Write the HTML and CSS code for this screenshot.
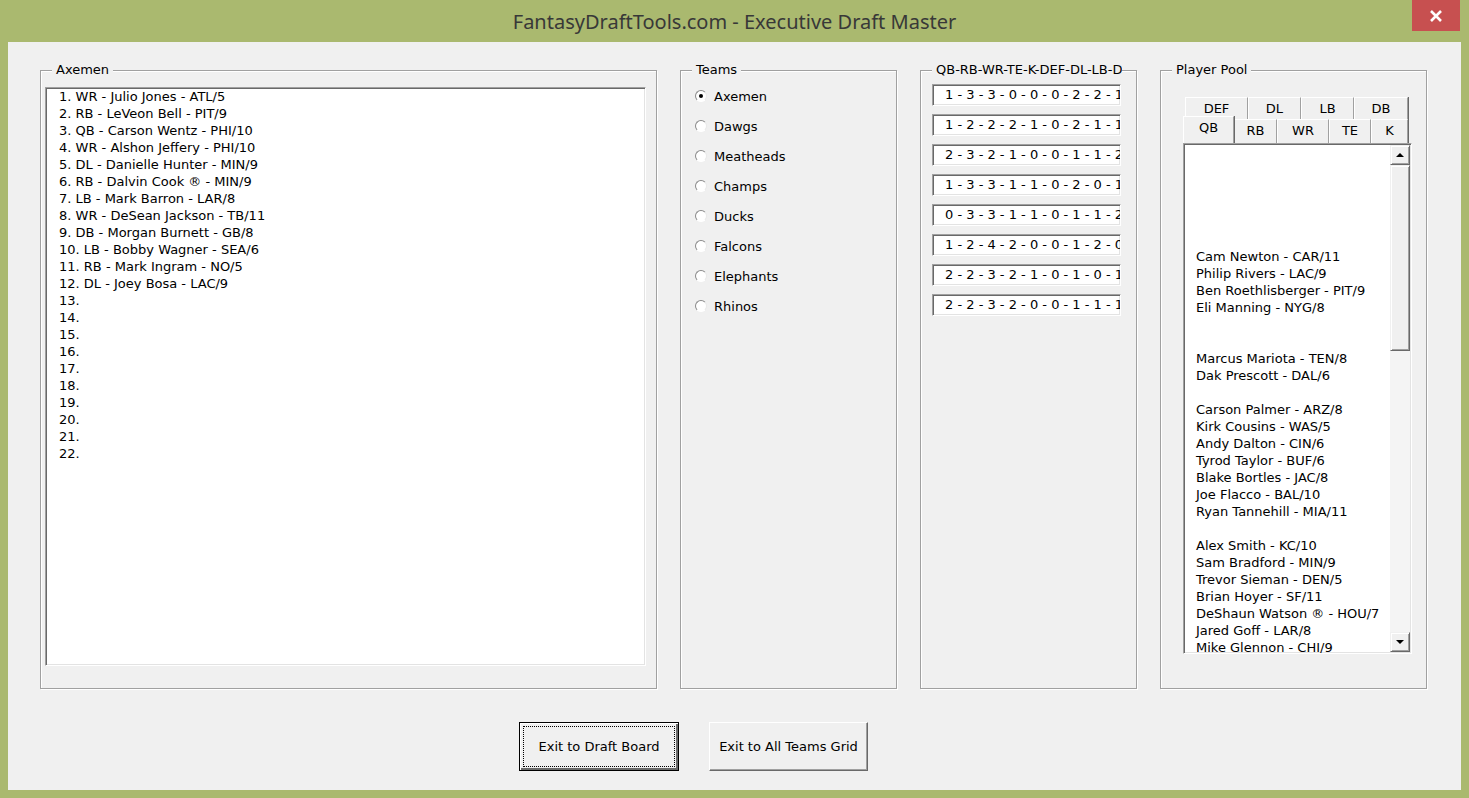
FILE: index.html
```html
<!DOCTYPE html>
<html lang="en">
<head>
  <meta charset="UTF-8">
  <meta name="viewport" content="width=device-width, initial-scale=1.0">
  <title>Executive Draft Master</title>
  <link rel="stylesheet" href="styles.css">
</head>
<body>
  <div class="window">
    <div class="titlebar">
      <div class="title">FantasyDraftTools.com - Executive Draft Master</div>
      <div class="close">
        <svg width="14" height="14" viewBox="0 0 14 14"><path d="M2 2 L12 12 M12 2 L2 12" stroke="#fff" stroke-width="2.6" fill="none"/></svg>
      </div>
    </div>

    <div class="client">
      <div class="groups">
        <!-- roster of selected team -->
        <div class="group roster">
          <span class="caption">Axemen</span>
          <div class="listbox roster-list">
            <div class="row">1. WR - Julio Jones - ATL/5</div>
            <div class="row">2. RB - LeVeon Bell - PIT/9</div>
            <div class="row">3. QB - Carson Wentz - PHI/10</div>
            <div class="row">4. WR - Alshon Jeffery - PHI/10</div>
            <div class="row">5. DL - Danielle Hunter - MIN/9</div>
            <div class="row">6. RB - Dalvin Cook &reg; - MIN/9</div>
            <div class="row">7. LB - Mark Barron - LAR/8</div>
            <div class="row">8. WR - DeSean Jackson - TB/11</div>
            <div class="row">9. DB - Morgan Burnett - GB/8</div>
            <div class="row">10. LB - Bobby Wagner - SEA/6</div>
            <div class="row">11. RB - Mark Ingram - NO/5</div>
            <div class="row">12. DL - Joey Bosa - LAC/9</div>
            <div class="row">13.</div>
            <div class="row">14.</div>
            <div class="row">15.</div>
            <div class="row">16.</div>
            <div class="row">17.</div>
            <div class="row">18.</div>
            <div class="row">19.</div>
            <div class="row">20.</div>
            <div class="row">21.</div>
            <div class="row">22.</div>
          </div>
        </div>

        <!-- team picker -->
        <div class="group teams">
          <span class="caption">Teams</span>
          <div class="radios">
            <div class="radio-row"><span class="radio checked"></span>Axemen</div>
            <div class="radio-row"><span class="radio"></span>Dawgs</div>
            <div class="radio-row"><span class="radio"></span>Meatheads</div>
            <div class="radio-row"><span class="radio"></span>Champs</div>
            <div class="radio-row"><span class="radio"></span>Ducks</div>
            <div class="radio-row"><span class="radio"></span>Falcons</div>
            <div class="radio-row"><span class="radio"></span>Elephants</div>
            <div class="radio-row"><span class="radio"></span>Rhinos</div>
          </div>
        </div>

        <!-- position counts per team -->
        <div class="group counts">
          <span class="caption clipped">QB-RB-WR-TE-K-DEF-DL-LB-DB</span>
          <div class="textboxes">
            <div class="textbox">1 - 3 - 3 - 0 - 0 - 0 - 2 - 2 - 1 - 0</div>
            <div class="textbox">1 - 2 - 2 - 2 - 1 - 0 - 2 - 1 - 1 - 0</div>
            <div class="textbox">2 - 3 - 2 - 1 - 0 - 0 - 1 - 1 - 2 - 0</div>
            <div class="textbox">1 - 3 - 3 - 1 - 1 - 0 - 2 - 0 - 1 - 0</div>
            <div class="textbox">0 - 3 - 3 - 1 - 1 - 0 - 1 - 1 - 2 - 0</div>
            <div class="textbox">1 - 2 - 4 - 2 - 0 - 0 - 1 - 2 - 0 - 0</div>
            <div class="textbox">2 - 2 - 3 - 2 - 1 - 0 - 1 - 0 - 1 - 0</div>
            <div class="textbox">2 - 2 - 3 - 2 - 0 - 0 - 1 - 1 - 1 - 0</div>
          </div>
        </div>

        <!-- available players -->
        <div class="group pool">
          <span class="caption">Player Pool</span>
          <div class="tabs">
            <div class="tab-row back">
              <div class="tab w-def">DEF</div>
              <div class="tab w-dl">DL</div>
              <div class="tab w-lb">LB</div>
              <div class="tab w-db">DB</div>
            </div>
            <div class="tab-row front">
              <div class="tab active w-qb">QB</div>
              <div class="tab w-rb">RB</div>
              <div class="tab w-wr">WR</div>
              <div class="tab w-te">TE</div>
              <div class="tab w-k">K</div>
            </div>
          </div>
          <div class="listbox pool-list">
            <div class="pool-items">
              <div class="row">&nbsp;</div>
              <div class="row">&nbsp;</div>
              <div class="row">&nbsp;</div>
              <div class="row">&nbsp;</div>
              <div class="row">&nbsp;</div>
              <div class="row">&nbsp;</div>
              <div class="row">Cam Newton - CAR/11</div>
              <div class="row">Philip Rivers - LAC/9</div>
              <div class="row">Ben Roethlisberger - PIT/9</div>
              <div class="row">Eli Manning - NYG/8</div>
              <div class="row">&nbsp;</div>
              <div class="row">&nbsp;</div>
              <div class="row">Marcus Mariota - TEN/8</div>
              <div class="row">Dak Prescott - DAL/6</div>
              <div class="row">&nbsp;</div>
              <div class="row">Carson Palmer - ARZ/8</div>
              <div class="row">Kirk Cousins - WAS/5</div>
              <div class="row">Andy Dalton - CIN/6</div>
              <div class="row">Tyrod Taylor - BUF/6</div>
              <div class="row">Blake Bortles - JAC/8</div>
              <div class="row">Joe Flacco - BAL/10</div>
              <div class="row">Ryan Tannehill - MIA/11</div>
              <div class="row">&nbsp;</div>
              <div class="row">Alex Smith - KC/10</div>
              <div class="row">Sam Bradford - MIN/9</div>
              <div class="row">Trevor Sieman - DEN/5</div>
              <div class="row">Brian Hoyer - SF/11</div>
              <div class="row">DeShaun Watson &reg; - HOU/7</div>
              <div class="row">Jared Goff - LAR/8</div>
              <div class="row">Mike Glennon - CHI/9</div>
            </div>
            <div class="scrollbar">
              <div class="scroll-btn"><span class="arrow up"></span></div>
              <div class="thumb"></div>
              <div class="track"></div>
              <div class="scroll-btn"><span class="arrow down"></span></div>
            </div>
          </div>
        </div>
      </div>

      <div class="buttons">
        <div class="button default"><span class="focus">Exit to Draft Board</span></div>
        <div class="button">Exit to All Teams Grid</div>
      </div>
    </div>
  </div>
</body>
</html>
```

FILE: styles.css
```css
body {
  margin: 0;
  background-color: #aab96f;
  font-family: "DejaVu Sans", Verdana, sans-serif;
  font-size: 13px;
  color: #000;
}
.window {
  width: 1469px;
  height: 798px;
  display: flex;
  flex-direction: column;
}
.titlebar {
  height: 42px;
  display: flex;
  justify-content: center;
  position: relative;
}
.title {
  font-family: "Noto Sans", "Open Sans", sans-serif;
  font-size: 20px;
  color: #383838;
  line-height: 44px;
}
.close {
  position: absolute;
  top: 0;
  right: 9px;
  width: 48px;
  height: 31px;
  background-color: #c75050;
  display: flex;
  justify-content: center;
  align-items: center;
}
.client {
  margin: 0 8px;
  height: 748px;
  background-color: #f0f0f0;
}

/* group boxes */
.groups {
  display: flex;
  gap: 23px;
  padding: 28px 0 0 32px;
}
.group {
  position: relative;
  height: 617px;
  border: 1px solid #a0a0a0;
  box-shadow: 1px 1px 0 #fff, inset 1px 1px 0 #fff;
}
.caption {
  position: absolute;
  top: -9px;
  left: 11px;
  padding: 0 4px;
  line-height: 16px;
  background-color: #f0f0f0;
  white-space: nowrap;
}
.caption.clipped {
  width: 182px;
  overflow: hidden;
}
.roster { width: 615px; }
.teams { width: 215px; }
.counts { width: 215px; }
.pool { width: 265px; }

/* sunken list boxes */
.listbox {
  background-color: #fff;
  border: 1px solid;
  border-color: #a0a0a0 #fff #fff #a0a0a0;
  box-shadow: inset 1px 1px 0 #696969, inset -1px -1px 0 #e3e3e3;
}
.row {
  height: 17px;
  line-height: 17px;
  white-space: nowrap;
}
.roster-list {
  margin: 16px 0 0 4px;
  width: 586px;
  height: 577px;
  padding: 0 0 0 13px;
}

/* radios */
.radios {
  padding: 10px 0 0 14px;
}
.radio-row {
  height: 30px;
  display: flex;
  align-items: center;
  gap: 7px;
}
.radio {
  width: 10px;
  height: 10px;
  border-radius: 50%;
  border: 1px solid;
  border-color: #8a8a8a #e8e8e8 #fff #8a8a8a;
  background-color: #fff;
  display: flex;
  justify-content: center;
  align-items: center;
}
.radio.checked::after {
  content: "";
  width: 4px;
  height: 4px;
  border-radius: 50%;
  background-color: #000;
}

/* count text boxes */
.textboxes {
  display: flex;
  flex-direction: column;
  gap: 8px;
  padding: 13px 0 0 11px;
}
.textbox {
  width: 175px;
  height: 20px;
  line-height: 20px;
  padding-left: 12px;
  overflow: hidden;
  white-space: nowrap;
  background-color: #fff;
  border: 1px solid;
  border-color: #a0a0a0 #fff #fff #a0a0a0;
  box-shadow: inset 1px 1px 0 #696969, inset -1px -1px 0 #e3e3e3;
}

/* tab strip */
.tabs {
  padding: 26px 0 0 22px;
}
.tab-row {
  display: flex;
  height: 23px;
}
.tab-row.back {
  padding-left: 2px;
  height: 22px;
}
.tab-row.front {
  height: 24px;
}
.tab {
  box-sizing: border-box;
  height: 100%;
  border-top: 1px solid #fff;
  border-left: 1px solid #fff;
  border-right: 1px solid #a0a0a0;
  box-shadow: 1px 0 0 #696969;
  text-align: center;
  line-height: 21px;
  background-color: #f0f0f0;
}
.tab.active {
  height: 27px;
  margin-top: -3px;
  line-height: 22px;
  position: relative;
}
.w-def { width: 63px; }
.w-dl { width: 53px; }
.w-lb { width: 53px; }
.w-db { width: 54px; }
.w-qb { width: 51px; }
.w-rb { width: 43px; }
.w-wr { width: 52px; }
.w-te { width: 42px; }
.w-k { width: 37px; }

.pool-list {
  margin: 0 0 0 22px;
  width: 227px;
  height: 509px;
  display: flex;
}
.pool-items {
  flex: 1;
  padding: 2px 0 0 12px;
  overflow: hidden;
}
.scrollbar {
  width: 20px;
  margin: 1px 1px 1px 0;
  display: flex;
  flex-direction: column;
  background-color: #f4f4f4;
}
.scroll-btn,
.thumb {
  box-sizing: border-box;
  background-color: #f0f0f0;
  border: 1px solid;
  border-color: #f0f0f0 #696969 #696969 #f0f0f0;
  box-shadow: inset 1px 1px 0 #fff, inset -1px -1px 0 #a0a0a0;
}
.scroll-btn {
  height: 20px;
  display: flex;
  justify-content: center;
  align-items: center;
}
.thumb {
  height: 186px;
}
.track {
  flex: 1;
}
.arrow {
  width: 0;
  height: 0;
  border-left: 4px solid transparent;
  border-right: 4px solid transparent;
}
.arrow.up { border-bottom: 4px solid #000; }
.arrow.down { border-top: 4px solid #000; }

/* command buttons */
.buttons {
  display: flex;
  gap: 30px;
  padding: 33px 0 0 511px;
}
.button {
  box-sizing: border-box;
  width: 159px;
  height: 49px;
  display: flex;
  justify-content: center;
  align-items: center;
  background-color: #f0f0f0;
  border: 1px solid;
  border-color: #fff #696969 #696969 #fff;
  box-shadow: inset -1px -1px 0 #a0a0a0;
}
.button.default {
  width: 160px;
  border: 1px solid #000;
  box-shadow: inset 1px 1px 0 #fff, inset -2px -2px 0 #696969;
  padding: 3px;
}
.focus {
  flex: 1;
  align-self: stretch;
  display: flex;
  justify-content: center;
  align-items: center;
  border: 1px dotted #000;
}
```
